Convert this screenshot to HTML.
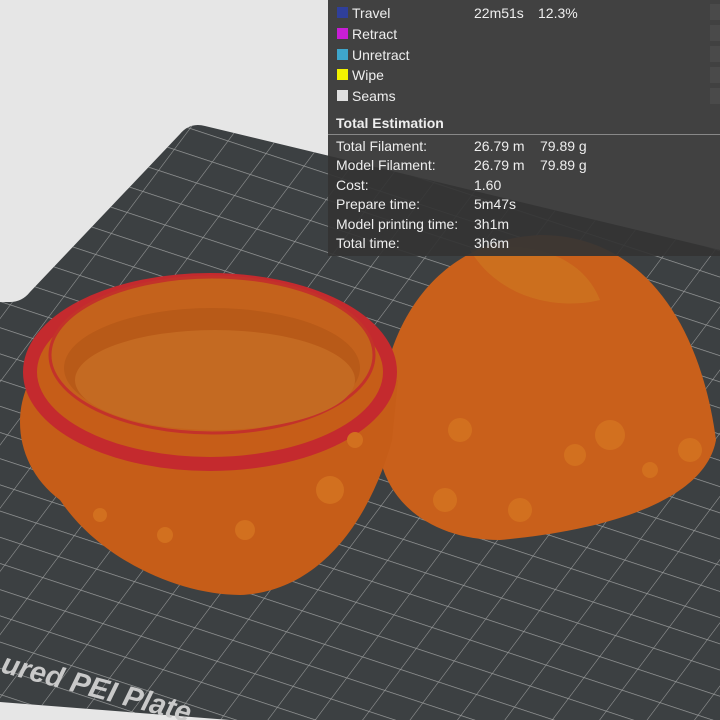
<!DOCTYPE html><html><head><style>
body{margin:0;width:720px;height:720px;overflow:hidden;background:#e6e6e6;font-family:"Liberation Sans",sans-serif}
#p{position:absolute;left:328px;top:0;width:392px;height:256px;background:rgba(52,52,52,0.93);color:#eee;font-size:14px}
.r{position:absolute;left:8px;white-space:nowrap}
.sq{position:absolute;left:9px;width:11px;height:11px}
.c2{position:absolute;left:146px}
.c3{position:absolute;left:212px}
.bx{position:absolute;left:382px;width:10px;height:16px;background:#4a4a4a}
</style></head><body>
<svg width="720" height="720" style="position:absolute;left:0;top:0">
<defs>
<pattern id="g" width="38" height="21" patternUnits="userSpaceOnUse" patternTransform="matrix(1 0.33 -0.75 1 190 128)">
<path d="M0 0H38M0 0V21" stroke="#9a9c9c" stroke-width="1.1" fill="none"/>
</pattern>
</defs>
<path d="M205 126 Q190 122 180 134 L30 292 Q22 302 10 302 L0 302 L0 702 L230 720 L720 720 L720 250 Z" fill="#3c4042"/>
<path d="M205 126 Q190 122 180 134 L30 292 Q22 302 10 302 L0 302 L0 702 L230 720 L720 720 L720 250 Z" fill="url(#g)"/>
<text x="0" y="672" transform="rotate(15 0 672)" font-size="29" font-weight="bold" font-style="italic" fill="#c9c9c9" font-family="Liberation Sans">ured PEI Plate</text>
<path d="M378 440 C378 320 440 240 540 235 C640 235 700 320 716 440 C705 500 610 530 500 540 C430 540 380 500 378 440 Z" fill="#c9601b"/>
<path d="M470 250 C520 240 580 250 600 300 C560 310 500 300 470 250Z" fill="#cf7a22" opacity="0.6"/>
<path d="M30 380 C10 420 20 470 60 500 C100 560 180 595 240 595 C320 592 370 520 392 440 L398 380 Z" fill="#c65d18"/>
<ellipse cx="210" cy="375" rx="182" ry="95" fill="#c65d18"/>
<ellipse cx="210" cy="372" rx="180" ry="92" fill="none" stroke="#c42a2e" stroke-width="14"/>
<ellipse cx="212" cy="355" rx="162" ry="78" fill="#c4621c"/>
<ellipse cx="212" cy="355" rx="162" ry="78" fill="none" stroke="#c3322a" stroke-width="3"/>
<ellipse cx="212" cy="368" rx="148" ry="60" fill="#b85a18"/>
<ellipse cx="215" cy="380" rx="140" ry="50" fill="#c46a22"/>
<g fill="#d2701f">
<circle cx="330" cy="490" r="14"/><circle cx="245" cy="530" r="10"/><circle cx="165" cy="535" r="8"/><circle cx="100" cy="515" r="7"/><circle cx="355" cy="440" r="8"/>
<circle cx="460" cy="430" r="12"/><circle cx="610" cy="435" r="15"/><circle cx="520" cy="510" r="12"/><circle cx="445" cy="500" r="12"/><circle cx="575" cy="455" r="11"/><circle cx="690" cy="450" r="12"/><circle cx="650" cy="470" r="8"/></g>
</svg>
<div id="p">
<div class="sq" style="top:7px;background:#2f3f9a"></div><div class="r" style="left:24px;top:5px">Travel</div><div class="c2" style="top:5px">22m51s</div><div class="c3" style="left:210px;top:5px">12.3%</div>
<div class="sq" style="top:28px;background:#c81ed6"></div><div class="r" style="left:24px;top:26px">Retract</div>
<div class="sq" style="top:49px;background:#3ea6cc"></div><div class="r" style="left:24px;top:47px">Unretract</div>
<div class="sq" style="top:69px;background:#f2f200"></div><div class="r" style="left:24px;top:67px">Wipe</div>
<div class="sq" style="top:90px;background:#e0e0e0"></div><div class="r" style="left:24px;top:88px">Seams</div>
<div class="r" style="top:115px;font-weight:bold">Total Estimation</div>
<div style="position:absolute;left:0;top:134px;width:392px;height:1px;background:#888"></div>
<div class="r" style="top:138px">Total Filament:</div><div class="c2" style="top:138px">26.79 m</div><div class="c3" style="top:138px">79.89 g</div>
<div class="r" style="top:157px">Model Filament:</div><div class="c2" style="top:157px">26.79 m</div><div class="c3" style="top:157px">79.89 g</div>
<div class="r" style="top:177px">Cost:</div><div class="c2" style="top:177px">1.60</div>
<div class="r" style="top:196px">Prepare time:</div><div class="c2" style="top:196px">5m47s</div>
<div class="r" style="top:216px">Model printing time:</div><div class="c2" style="top:216px">3h1m</div>
<div class="r" style="top:235px">Total time:</div><div class="c2" style="top:235px">3h6m</div>
<div class="bx" style="top:4px"></div><div class="bx" style="top:25px"></div><div class="bx" style="top:46px"></div><div class="bx" style="top:67px"></div><div class="bx" style="top:88px"></div>
</div>
</body></html>
